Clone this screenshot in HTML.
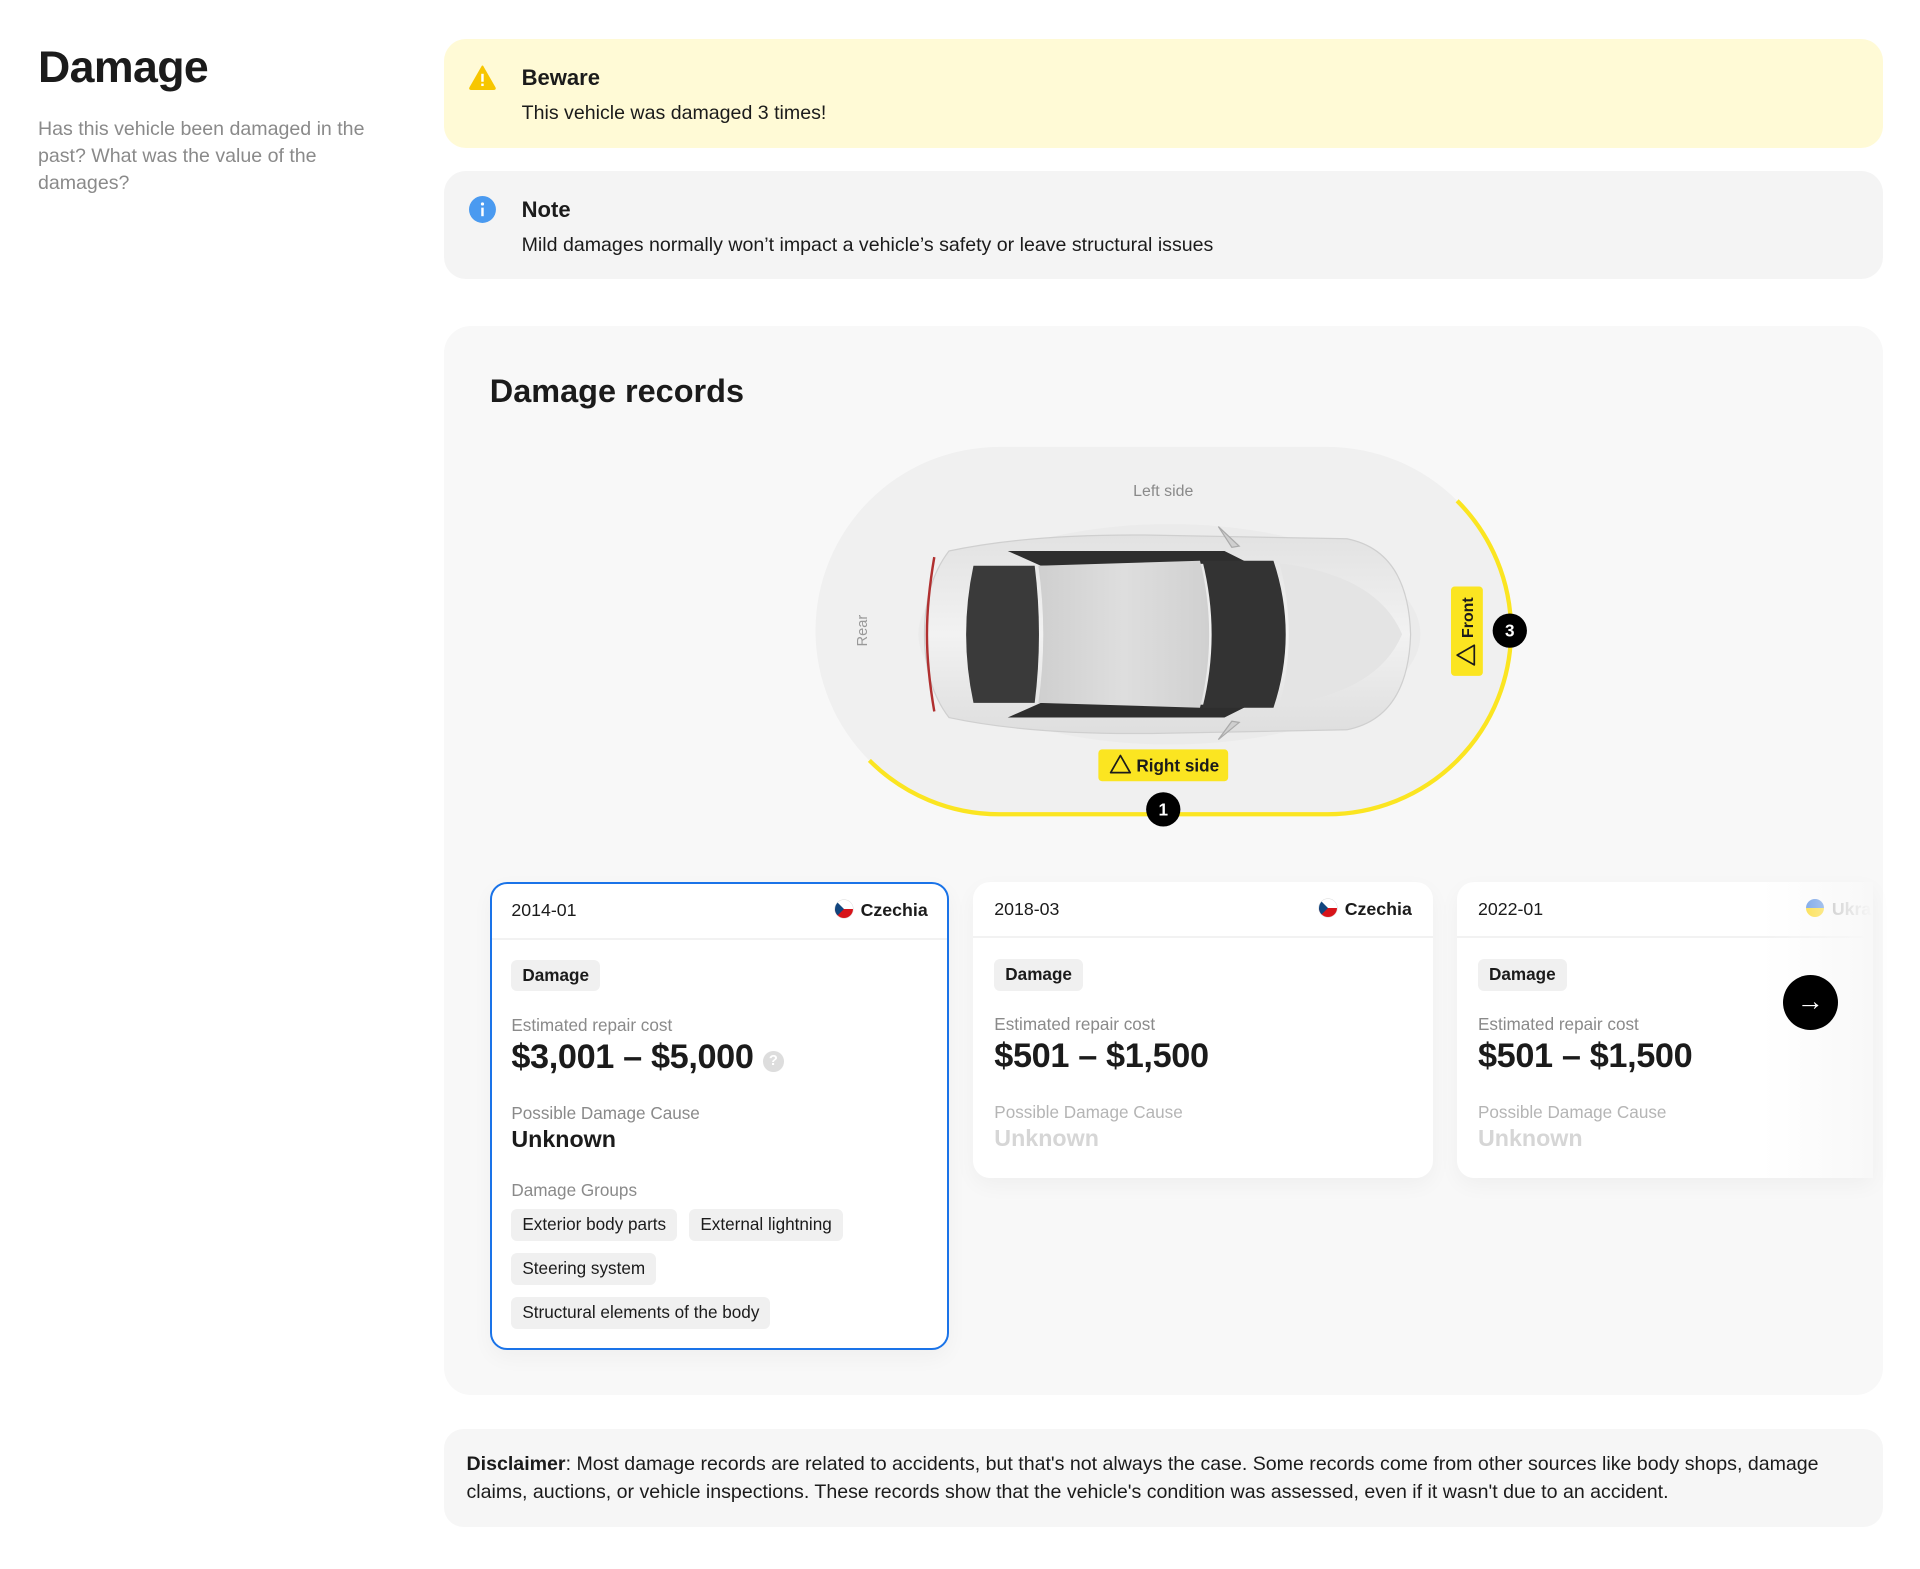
<!DOCTYPE html>
<html><head><meta charset="utf-8"><style>
html,body{margin:0;padding:0;background:#fff}
body{width:1568px;height:1281px;zoom:1.22449;position:relative;overflow:hidden;font-family:"Liberation Sans",Arial,sans-serif;color:#1b1b1b}
.abs{position:absolute}
h1{position:absolute;left:31px;top:35px;margin:0;font-size:36.5px;font-weight:700;letter-spacing:-0.5px}
.sub{left:31px;top:95px;width:290px;font-size:16px;line-height:22px;color:#8a8a8a}
.box{left:363px;width:1175px;border-radius:18px}
.bt{font-size:18px;font-weight:700;left:63px}
.bx{font-size:16px;left:63px}
.panel{left:363px;top:266px;width:1175px;height:873px;background:#f8f8f8;border-radius:22px}
.card{background:#fff;border-radius:14px;box-shadow:0 6px 18px rgba(0,0,0,.04);overflow:hidden}
.hd{height:44px;border-bottom:2px solid #f2f2f2;position:relative;font-size:14.5px}
.chip{display:inline-block;background:#f0f0f0;border-radius:5px;padding:0 9px;height:26px;line-height:26px;font-size:14px;margin-right:6px}
.lbl{font-size:14px;color:#8a8a8a}
.price{font-size:28px;font-weight:700;letter-spacing:-0.3px}
.flag{display:inline-block;width:15px;height:15px;border-radius:50%;vertical-align:-2px;margin-right:6px}
.cz{background:linear-gradient(#fff 50%,#d7141a 50%);position:relative;overflow:hidden;box-shadow:0 0 0 .5px #ddd}
.cz:before{content:"";position:absolute;left:0;top:0;border-left:8px solid #11457e;border-top:7.5px solid transparent;border-bottom:7.5px solid transparent}
.ua{background:linear-gradient(#3d7ee0 50%,#ffd500 50%)}
.groups .chip{margin-bottom:10px}
</style></head><body>
<h1>Damage</h1>
<div class="abs sub">Has this vehicle been damaged in the past? What was the value of the damages?</div>

<div class="abs box" style="top:32px;height:89px;background:#fffad6">
  <svg class="abs" style="left:20px;top:20px" width="22" height="22" viewBox="0 0 22 22"><path d="M11 2 L21 19.5 Q21.5 20.5 20 20.5 L2 20.5 Q0.5 20.5 1 19.5 Z" fill="#f7c600" stroke="#f7c600" stroke-linejoin="round" stroke-width="1.5"/><rect x="10" y="8" width="2" height="6.5" fill="#fff"/><rect x="10" y="16" width="2" height="2" fill="#fff"/></svg>
  <div class="abs bt" style="top:21px">Beware</div>
  <div class="abs bx" style="top:51px">This vehicle was damaged 3 times!</div>
</div>
<div class="abs box" style="top:140px;height:88px;background:#f4f4f4">
  <svg class="abs" style="left:20px;top:20px" width="22" height="22" viewBox="0 0 22 22"><circle cx="11" cy="11" r="11" fill="#4a9af0"/><rect x="10" y="9.5" width="2" height="7" fill="#fff"/><circle cx="11" cy="6.5" r="1.3" fill="#fff"/></svg>
  <div class="abs bt" style="top:21px">Note</div>
  <div class="abs bx" style="top:51px">Mild damages normally won’t impact a vehicle’s safety or leave structural issues</div>
</div>

<div class="abs panel"></div>
<div class="abs" style="left:400px;top:305px;font-size:26.5px;font-weight:700">Damage records</div>

<svg class="abs" style="left:0;top:0" width="1568" height="720" viewBox="0 0 1568 720">
  <defs>
    <linearGradient id="bd" x1="0" y1="0" x2="0" y2="1"><stop offset="0" stop-color="#e2e2e2"/><stop offset=".5" stop-color="#f2f2f2"/><stop offset="1" stop-color="#dedede"/></linearGradient>
    <linearGradient id="rf" x1="0" y1="0" x2="1" y2="0"><stop offset="0" stop-color="#cfcfcf"/><stop offset=".5" stop-color="#dedede"/><stop offset="1" stop-color="#d0d0d0"/></linearGradient>
  </defs>
  <rect x="666" y="365" width="568" height="300" rx="150" fill="#f0f0f0"/>
  <path d="M710 621 A150 150 0 0 0 816 665 L1084 665 A150 150 0 0 0 1234 515 A150 150 0 0 0 1190 409" fill="none" stroke="#fbe521" stroke-width="3.5"/>
  <ellipse cx="955" cy="518" rx="205" ry="90" fill="#e8e8e8" opacity=".6"/>
  <path d="M775 450 Q840 436 940 437 L1100 440 Q1150 450 1152 518 Q1150 586 1100 596 L940 599 Q840 600 775 586 Q755 560 755 518 Q755 476 775 450 Z" fill="url(#bd)" stroke="#cfcfcf"/>
  <path d="M763 455 Q757 490 757 518 Q757 546 763 581" fill="none" stroke="#b03030" stroke-width="2"/>
  <path d="M823 450 L1000 450 Q1010 455 1020 460 L850 462 Z" fill="#2e2e2e"/>
  <path d="M823 586 L1000 586 Q1010 581 1020 576 L850 574 Z" fill="#2e2e2e"/>
  <path d="M795 462 L845 462 Q852 518 845 574 L795 574 Q783 518 795 462 Z" fill="#3a3a3a"/>
  <path d="M848 462 L980 458 Q995 518 980 578 L848 574 Q856 518 848 462 Z" fill="url(#rf)"/>
  <path d="M982 458 L1040 458 Q1060 518 1040 578 L982 578 Q997 518 982 458 Z" fill="#333"/>
  <path d="M1045 460 Q1125 470 1145 518 Q1125 566 1045 576 Q1060 518 1045 460 Z" fill="#e4e4e4"/>
  <path d="M995 430 L1012 446 L1006 447 Z" fill="#cfcfcf" stroke="#aaa"/>
  <path d="M995 604 L1012 590 L1006 589 Z" fill="#cfcfcf" stroke="#aaa"/>
  <text x="950" y="405" font-family="Liberation Sans, sans-serif" font-size="13" fill="#8a8a8a" text-anchor="middle">Left side</text>
  <text transform="translate(708 515) rotate(-90)" font-family="Liberation Sans, sans-serif" font-size="12" fill="#999" text-anchor="middle">Rear</text>
  <rect x="897" y="612" width="106" height="26" rx="3" fill="#fbe521"/>
  <path d="M915 617 L923 631 L907 631 Z" fill="none" stroke="#1b1b1b" stroke-width="1.4" stroke-linejoin="round"/>
  <text x="928" y="630" font-family="Liberation Sans, sans-serif" font-size="14" font-weight="700" fill="#1b1b1b">Right side</text>
  <rect x="1185" y="479" width="26" height="73" rx="3" fill="#fbe521"/>
  <path d="M1190 535 L1204 527 L1204 543 Z" fill="none" stroke="#1b1b1b" stroke-width="1.4" stroke-linejoin="round"/>
  <text transform="translate(1203 521) rotate(-90)" font-family="Liberation Sans, sans-serif" font-size="13" font-weight="700" fill="#1b1b1b">Front</text>
  <circle cx="950" cy="661" r="14" fill="#000"/><text x="950" y="666" font-family="Liberation Sans, sans-serif" font-size="14" font-weight="700" fill="#fff" text-anchor="middle">1</text>
  <circle cx="1233" cy="515" r="14" fill="#000"/><text x="1233" y="520" font-family="Liberation Sans, sans-serif" font-size="14" font-weight="700" fill="#fff" text-anchor="middle">3</text>
</svg>

<div class="abs card" style="left:400px;top:720px;width:372px;height:379px;border:2px solid #1a73e8">
  <div class="hd"><span class="abs" style="left:16px;top:13px">2014-01</span><span class="abs" style="right:16px;top:13px;font-weight:700"><span class="flag cz"></span>Czechia</span></div>
  <div class="abs" style="left:16px;top:62px"><span class="chip" style="font-weight:700">Damage</span></div>
  <div class="abs lbl" style="left:16px;top:107px">Estimated repair cost</div>
  <div class="abs price" style="left:16px;top:126px">$3,001 – $5,000 <span style="display:inline-block;width:17px;height:17px;border-radius:50%;background:#ddd;color:#fff;font-size:12px;text-align:center;line-height:17px;vertical-align:2px">?</span></div>
  <div class="abs lbl" style="left:16px;top:179px">Possible Damage Cause</div>
  <div class="abs" style="left:16px;top:198px;font-size:19px;font-weight:700">Unknown</div>
  <div class="abs lbl" style="left:16px;top:242px">Damage Groups</div>
  <div class="abs groups" style="left:16px;top:266px;width:350px;font-size:0"><span class="chip">Exterior body parts</span><span class="chip" style="margin-left:4px">External lightning</span><br><span class="chip">Steering system</span><br><span class="chip">Structural elements of the body</span></div>
</div>
<div class="abs card" style="left:795px;top:720px;width:375px;height:242px">
  <div class="hd"><span class="abs" style="left:17px;top:14px">2018-03</span><span class="abs" style="right:17px;top:14px;font-weight:700"><span class="flag cz"></span>Czechia</span></div>
  <div class="abs" style="left:17px;top:63px"><span class="chip" style="font-weight:700">Damage</span></div>
  <div class="abs lbl" style="left:17px;top:108px">Estimated repair cost</div>
  <div class="abs price" style="left:17px;top:127px">$501 – $1,500</div>
  <div class="abs lbl" style="left:17px;top:180px;color:#b5b5b5">Possible Damage Cause</div>
  <div class="abs" style="left:17px;top:199px;font-size:19px;font-weight:700;color:#d6d6d6">Unknown</div>
</div>
<div class="abs card" style="left:1190px;top:720px;width:340px;height:242px;border-radius:14px 0 0 14px">
  <div class="hd"><span class="abs" style="left:17px;top:14px">2022-01</span><span class="abs" style="left:285px;top:14px;font-weight:700;color:#999;white-space:nowrap"><span class="flag ua"></span>Ukraine</span></div>
  <div class="abs" style="left:17px;top:63px"><span class="chip" style="font-weight:700">Damage</span></div>
  <div class="abs lbl" style="left:17px;top:108px">Estimated repair cost</div>
  <div class="abs price" style="left:17px;top:127px">$501 – $1,500</div>
  <div class="abs lbl" style="left:17px;top:180px;color:#b5b5b5">Possible Damage Cause</div>
  <div class="abs" style="left:17px;top:199px;font-size:19px;font-weight:700;color:#d6d6d6">Unknown</div>
  <div class="abs" style="left:250px;top:0;width:90px;height:242px;background:linear-gradient(90deg,rgba(248,248,248,0),#f8f8f8)"></div>
</div>
<div class="abs" style="left:1456px;top:796px;width:45px;height:45px;border-radius:50%;background:#000;color:#fff;text-align:center;line-height:43px;font-size:22px">→</div>

<div class="abs box" style="top:1167px;height:80px;background:#f6f6f6;border-radius:16px">
  <div class="abs" style="left:18px;top:18px;right:18px;font-size:16px;line-height:22.5px"><b>Disclaimer</b>: Most damage records are related to accidents, but that's not always the case. Some records come from other sources like body shops, damage claims, auctions, or vehicle inspections. These records show that the vehicle's condition was assessed, even if it wasn't due to an accident.</div>
</div>
</body></html>
